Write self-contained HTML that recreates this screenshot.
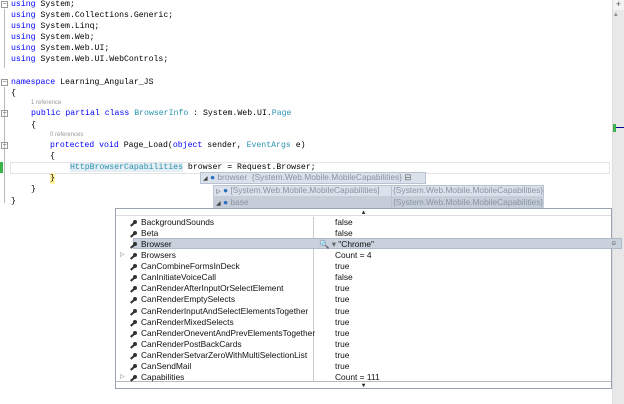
<!DOCTYPE html>
<html><head><style>
*{margin:0;padding:0;box-sizing:border-box}
body{width:624px;height:404px;background:#fff;position:relative;overflow:hidden;font-family:"Liberation Mono",monospace}
.c{position:absolute;font-size:8.2px;line-height:11px;white-space:pre;color:#000}
.k{color:#0000ff}.t{color:#2b91af}
.ref{position:absolute;font-family:"Liberation Sans",sans-serif;font-size:6px;color:#999}
.gl{position:absolute;border-left:1px solid #bbb}
.box{position:absolute;width:7px;height:7px;border:1px solid #999;font-size:7px;line-height:5px;text-align:center;color:#555;font-family:"Liberation Sans"}
.s{font-family:"Liberation Sans",sans-serif;font-size:8.4px;position:absolute;white-space:pre}
.row{position:absolute;left:116px;width:495px;height:11px}
.row .n{position:absolute;left:25px;top:0;font-family:"Liberation Sans",sans-serif;font-size:8.4px;line-height:11px;color:#111}
.row .v{position:absolute;left:219px;top:0;font-family:"Liberation Sans",sans-serif;font-size:8.4px;line-height:11px;color:#111}
.row .w{position:absolute;left:14px;top:3px;width:8px;height:6px}
.row .w:before{content:"";position:absolute;left:0;top:3px;width:6px;height:2px;background:#333;transform:rotate(-40deg)}
.row .w:after{content:"";position:absolute;left:3px;top:0;width:4px;height:4px;border-radius:50%;background:#333}
.row .a{position:absolute;left:4px;top:1px;font-size:6px;color:#777;font-family:"DejaVu Sans"}
</style></head><body>
<div class="box" style="left:1px;top:1px">−</div>
<div class="gl" style="left:4px;top:9px;height:59px"></div>
<div class="c" style="left:11px;top:-1px"><span class="k">using</span> System;</div>
<div class="c" style="left:11px;top:10px"><span class="k">using</span> System.Collections.Generic;</div>
<div class="c" style="left:11px;top:21px"><span class="k">using</span> System.Linq;</div>
<div class="c" style="left:11px;top:32px"><span class="k">using</span> System.Web;</div>
<div class="c" style="left:11px;top:43px"><span class="k">using</span> System.Web.UI;</div>
<div class="c" style="left:11px;top:54px"><span class="k">using</span> System.Web.UI.WebControls;</div>
<div class="box" style="left:1px;top:79px">−</div>
<div class="gl" style="left:4px;top:87px;height:116px"></div>
<div class="c" style="left:11px;top:77px"><span class="k">namespace</span> Learning_Angular_JS</div>
<div class="c" style="left:11px;top:88px">{</div>
<div class="ref" style="left:31px;top:100px">1 reference</div>
<div class="box" style="left:1px;top:110px">−</div>
<div class="c" style="left:31px;top:108px"><span class="k">public partial class</span> <span class="t">BrowserInfo</span> : System.Web.UI.<span class="t">Page</span></div>
<div class="c" style="left:31px;top:120px">{</div>
<div class="ref" style="left:50px;top:132px">0 references</div>
<div class="box" style="left:1px;top:142px">−</div>
<div class="c" style="left:50px;top:140px"><span class="k">protected void</span> Page_Load(<span class="k">object</span> sender, <span class="t">EventArgs</span> e)</div>
<div class="c" style="left:50px;top:151px">{</div>
<div style="position:absolute;left:0;top:162px;width:3px;height:11px;background:#3cb34a"></div>
<div style="position:absolute;left:10px;top:162px;width:600px;height:12px;border:1px solid #e4e4e4"></div>
<div class="c" style="left:70px;top:162px"><span class="t" style="background:#e4eef4">HttpBrowserCapabilities</span> browser = Request.Browser;</div>
<div class="c" style="left:50px;top:173px;background:#fff3a0">}</div>
<div class="c" style="left:31px;top:184px">}</div>
<div class="c" style="left:11px;top:196px">}</div>

<div style="position:absolute;left:612px;top:0;width:12px;height:404px;background:#e8e8e8;border-left:1px solid #ddd"></div>
<div style="position:absolute;left:613px;top:0;width:11px;height:10px;background:#f3f3f3;font-size:9px;line-height:10px;text-align:center;color:#555">+</div>
<div style="position:absolute;left:614px;top:11px;font-size:6px;color:#888">▲</div>
<div style="position:absolute;left:613px;top:124px;width:3px;height:8px;background:#3cb34a"></div>
<div style="position:absolute;left:616px;top:127px;width:8px;height:1px;background:#00008b"></div>

<div style="position:absolute;left:200px;top:172px;width:226px;height:12px;background:#dbe1ea;border:1px solid #b8c2d0"></div>
<div class="s" style="left:203px;top:172px;color:#8a93a4"><span style="color:#444;font-size:6px">◢</span> <span style="color:#2a6fc0">●</span> browser  {System.Web.Mobile.MobileCapabilities} <span style="color:#666">⊟</span></div>
<div style="position:absolute;left:213px;top:185px;width:331px;height:24px;background:#dbe1ea;border:1px solid #b8c2d0"></div>
<div style="position:absolute;left:213px;top:196px;width:331px;height:12px;background:#c5cdd9"></div>
<div style="position:absolute;left:391px;top:186px;width:1px;height:22px;background:#b8c2d0"></div>
<div class="s" style="left:216px;top:185px;color:#8a93a4"><span style="color:#444;font-size:6px">▷</span> <span style="color:#2a6fc0">●</span> [System.Web.Mobile.MobileCapabilities]</div>
<div class="s" style="left:393px;top:185px;color:#8a93a4">{System.Web.Mobile.MobileCapabilities}</div>
<div class="s" style="left:216px;top:197px;color:#8a93a4"><span style="color:#444;font-size:6px">◢</span> <span style="color:#2a6fc0">●</span> base</div>
<div class="s" style="left:393px;top:197px;color:#8a93a4">{System.Web.Mobile.MobileCapabilities}</div>

<div style="position:absolute;left:115px;top:208px;width:497px;height:181px;background:#fff;border:1px solid #9aa3b0"></div>
<div style="position:absolute;left:116px;top:209px;width:495px;height:7px;border-bottom:1px solid #ddd;text-align:center;font-size:6px;line-height:7px;color:#222">▲</div>
<div style="position:absolute;left:116px;top:381px;width:495px;height:7px;border-top:1px solid #bbb;text-align:center;font-size:6px;line-height:7px;color:#222">▼</div>
<div style="position:absolute;left:313px;top:217px;width:1px;height:164px;background:#ccc"></div>
<div style="position:absolute;left:133px;top:238px;width:489px;height:11px;background:#c9d1dd;border:1px solid #b0b9c6"></div>
<div style="position:absolute;left:612px;top:240px;font-size:6px;color:#666">⊟</div>

<div class="row" style="top:217px"><span class="w"></span><span class="n">BackgroundSounds</span><span class="v">false</span></div>
<div class="row" style="top:228px"><span class="w"></span><span class="n">Beta</span><span class="v">false</span></div>
<div class="row" style="top:239px"><span class="w"></span><span class="n">Browser</span><span class="v" style="left:203px"><span style="color:#666">🔍 ▾</span> "Chrome"</span></div>
<div class="row" style="top:250px"><span class="a">▷</span><span class="w"></span><span class="n">Browsers</span><span class="v">Count = 4</span></div>
<div class="row" style="top:261px"><span class="w"></span><span class="n">CanCombineFormsInDeck</span><span class="v">true</span></div>
<div class="row" style="top:272px"><span class="w"></span><span class="n">CanInitiateVoiceCall</span><span class="v">false</span></div>
<div class="row" style="top:283px"><span class="w"></span><span class="n">CanRenderAfterInputOrSelectElement</span><span class="v">true</span></div>
<div class="row" style="top:294px"><span class="w"></span><span class="n">CanRenderEmptySelects</span><span class="v">true</span></div>
<div class="row" style="top:306px"><span class="w"></span><span class="n">CanRenderInputAndSelectElementsTogether</span><span class="v">true</span></div>
<div class="row" style="top:317px"><span class="w"></span><span class="n">CanRenderMixedSelects</span><span class="v">true</span></div>
<div class="row" style="top:328px"><span class="w"></span><span class="n">CanRenderOneventAndPrevElementsTogether</span><span class="v">true</span></div>
<div class="row" style="top:339px"><span class="w"></span><span class="n">CanRenderPostBackCards</span><span class="v">true</span></div>
<div class="row" style="top:350px"><span class="w"></span><span class="n">CanRenderSetvarZeroWithMultiSelectionList</span><span class="v">true</span></div>
<div class="row" style="top:361px"><span class="w"></span><span class="n">CanSendMail</span><span class="v">true</span></div>
<div class="row" style="top:372px"><span class="a">▷</span><span class="w"></span><span class="n">Capabilities</span><span class="v">Count = 111</span></div>
</body></html>
